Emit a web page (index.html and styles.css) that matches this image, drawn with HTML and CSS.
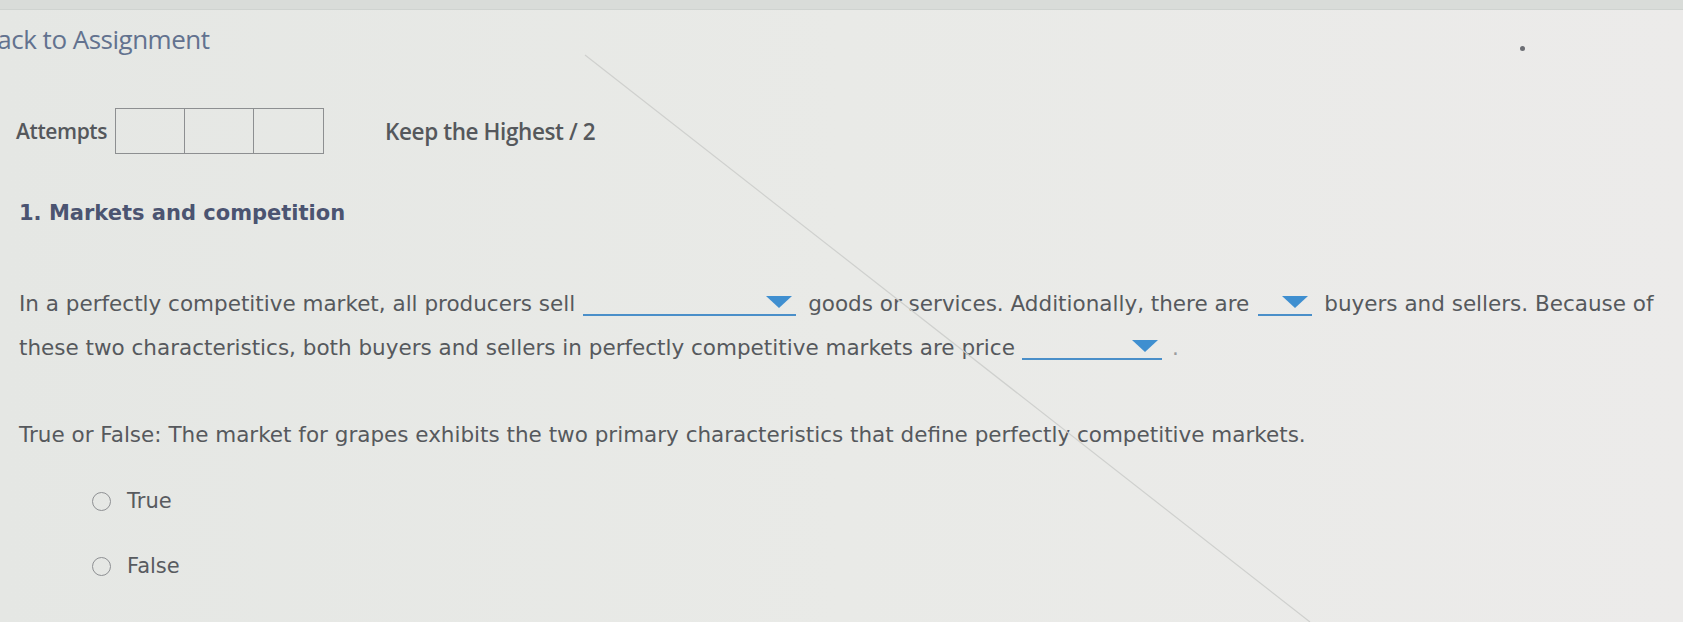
FILE: index.html
```html
<!DOCTYPE html>
<html lang="en">
<head>
    <meta charset="UTF-8">
    <title>Markets and competition</title>
    <link rel="stylesheet" href="styles.css">
</head>
<body>
    <div class="topbar"></div>
    <div class="page">
        <a class="back-link" href="#">Back to Assignment</a>

        <div class="attempts">
            <span class="attempts-label">Attempts</span>
            <div class="attempt-boxes">
                <div class="attempt-box"></div>
                <div class="attempt-box"></div>
                <div class="attempt-box"></div>
            </div>
            <span class="keep">Keep the Highest / 2</span>
        </div>

        <h2 class="question-title">1. Markets and competition</h2>

        <p class="passage">
            In a perfectly competitive market, all producers sell<span class="dropdown dd-wide"><span class="caret"></span></span>goods or services. Additionally, there are<span class="dropdown dd-small"><span class="caret"></span></span>buyers and sellers. Because of these two characteristics, both buyers and sellers in perfectly competitive markets are price<span class="dropdown dd-mid"><span class="caret"></span></span><span class="dot">.</span>
        </p>

        <p class="prompt">True or False: The market for grapes exhibits the two primary characteristics that define perfectly competitive markets.</p>

        <div class="options">
            <label class="option"><span class="radio"></span>True</label>
            <label class="option"><span class="radio"></span>False</label>
        </div>
    </div>

    <div class="speck"></div>
    <svg class="glare" width="1683" height="622" viewBox="0 0 1683 622">
        <line x1="585" y1="55" x2="1310" y2="622" stroke="#cfd0ce" stroke-width="1.2" />
    </svg>
</body>
</html>
```

FILE: styles.css
```css
* {
    margin: 0;
    padding: 0;
    box-sizing: border-box;
}

body {
    font-family: "DejaVu Sans", Verdana, sans-serif;
    background: linear-gradient(90deg, #e5e7e4 0%, #e9eae7 50%, #ecebea 100%);
    color: #56595d;
    width: 1683px;
    height: 622px;
    overflow: hidden;
    position: relative;
}

.topbar {
    height: 10px;
    background: #d9dcd9;
    border-bottom: 1px solid #cfd3d0;
}

.page {
    padding: 0 12px 0 19px;
}

.back-link {
    display: block;
    margin: 12px 0 0 -38px;
    font-family: "Open Sans", sans-serif;
    font-size: 26px;
    line-height: 34px;
    letter-spacing: -0.5px;
    color: #62728f;
    text-decoration: none;
}

.attempts {
    display: flex;
    align-items: center;
    margin-top: 52px;
}

.attempts-label {
    font-family: "Open Sans", sans-serif;
    font-weight: 600;
    font-size: 21px;
    color: #55585c;
    letter-spacing: -0.4px;
    margin-left: -3px;
    margin-right: 8px;
}

.attempt-boxes {
    display: flex;
    border: 1.5px solid #8d8f91;
}

.attempt-box {
    width: 69px;
    height: 44px;
    border-right: 1.5px solid #8d8f91;
}

.attempt-box:last-child {
    border-right: none;
}

.keep {
    font-family: "Open Sans", sans-serif;
    font-weight: 600;
    font-size: 22.5px;
    color: #55585c;
    letter-spacing: -0.4px;
    margin-left: 61px;
}

.question-title {
    font-size: 21px;
    font-weight: bold;
    color: #4b5471;
    line-height: 30px;
    margin-top: 44px;
}

.passage {
    font-size: 21.5px;
    line-height: 44px;
    margin-top: 54px;
}

.dropdown {
    display: inline-block;
    position: relative;
    height: 20px;
    border-bottom: 2px solid #4a8fc9;
    vertical-align: -5px;
    margin: 0 12px 0 8px;
}

.dd-wide {
    width: 213px;
}

.dd-small {
    width: 54px;
    margin: 0 12px 0 9px;
}

.dd-mid {
    width: 140px;
    margin: 0 10px 0 7px;
}

.caret {
    position: absolute;
    right: 4px;
    top: 0;
    width: 0;
    height: 0;
    border-left: 13px solid transparent;
    border-right: 13px solid transparent;
    border-top: 12px solid #3f8fd0;
}

.dot {
    color: #9a9c9e;
}

.prompt {
    font-size: 21.5px;
    line-height: 30px;
    margin-top: 50px;
}

.options {
    display: flex;
    flex-direction: column;
    gap: 35px;
    margin-top: 36px;
    padding-left: 73px;
}

.option {
    display: flex;
    align-items: center;
    font-size: 21px;
    line-height: 30px;
    color: #585b5f;
}

.radio {
    width: 19px;
    height: 19px;
    border: 1.5px solid #8e9093;
    border-radius: 50%;
    margin-right: 16px;
}

.speck {
    position: absolute;
    left: 1520px;
    top: 46px;
    width: 5px;
    height: 5px;
    border-radius: 50%;
    background: #6c6e74;
}

.glare {
    position: absolute;
    left: 0;
    top: 0;
    pointer-events: none;
}
```
